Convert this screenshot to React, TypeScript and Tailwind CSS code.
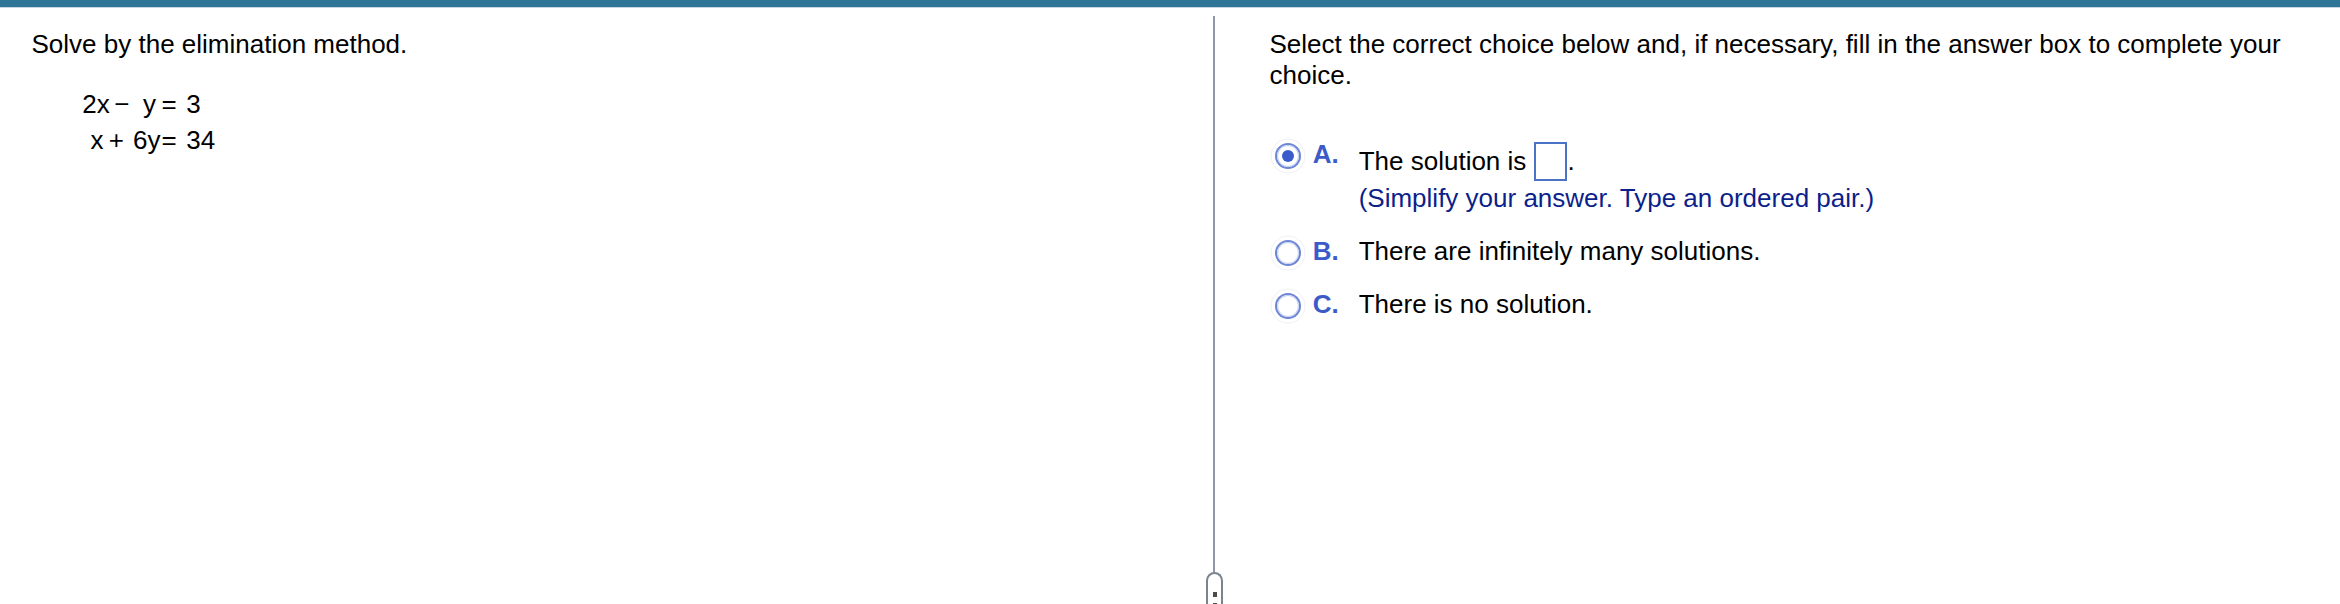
import React from "react"

function Radio({ checked }: { checked?: boolean }) {
    return (
        <svg width="36" height="36" viewBox="0 0 36 36" className="-m-[5px] block shrink-0">
            <circle cx="18" cy="18" r="17" fill="none" stroke="#f0f1f4" strokeWidth="1" />
            <circle cx="18" cy="18" r="12" fill="#fff" stroke="#6d86d6" strokeWidth="2" />
            <circle cx="18" cy="18" r="10.5" fill="none" stroke="#c3cdee" strokeWidth="1" />
            {checked && <circle cx="18" cy="18" r="6" fill="#3b5acb" />}
        </svg>
    )
}

function Choice({ letter, checked, className, children }: { letter: string; checked?: boolean; className?: string; children: React.ReactNode }) {
    return (
        <div className={"flex items-start " + (className ?? "")}>
            <div className="ml-[5.5px] mt-[4px]">
                <Radio checked={checked} />
            </div>
            <span className="ml-[11.7px] w-[46px] shrink-0 font-bold text-[#3d5bc8]">{letter}</span>
            {children}
        </div>
    )
}

function App() {
    return (
        <div className="h-[604px] w-[2340px] overflow-hidden bg-white font-['Liberation_Sans',Arial,sans-serif] text-[26px] leading-[31.2px] text-black">
            <div className="h-[7px] bg-[#2f7597]" />
            <div className="h-px bg-[#c9d7e1]" />

            <div className="flex">
                {/* question */}
                <div className="w-[1213px] shrink-0 pl-[31.5px] pt-[21px]">
                    <p>Solve by the elimination method.</p>
                    <div className="ml-[46.5px] mt-[26px] grid w-max grid-cols-[55px_23px_auto_auto] leading-[36px]">
                        <div className="pl-[4.3px]">
                            <span>2x</span>
                            <span className="ml-[4.6px]">−</span>
                        </div>
                        <div className="text-right">y</div>
                        <div className="pl-[5.5px]">=</div>
                        <div className="pl-[9.5px]">3</div>

                        <div className="pl-[12.5px]">
                            <span>x</span>
                            <span className="ml-[5.2px]">+</span>
                        </div>
                        <div className="text-right">6y</div>
                        <div className="pl-[5.5px]">=</div>
                        <div className="pl-[9.5px]">34</div>
                    </div>
                </div>

                {/* divider */}
                <div className="relative w-[2px] shrink-0">
                    <div className="mt-[8px] h-[556px] w-[2px] bg-[#8f97a8]" />
                    <div className="absolute left-[-7px] top-[564px] flex h-[48px] w-[17px] flex-col items-center gap-[6px] rounded-t-full border-2 border-b-0 border-[#7b8391] bg-white pt-[17.7px]">
                        <span className="h-[5px] w-[4px] bg-[#4b4b4b]" />
                        <span className="h-[5px] w-[4px] bg-[#4b4b4b]" />
                    </div>
                </div>

                {/* answer */}
                <div className="flex-1 pl-[54.5px] pr-[20px] pt-[21px]">
                    <p>Select the correct choice below and, if necessary, fill in the answer box to complete your choice.</p>

                    <Choice letter="A." checked className="mt-[47.5px]">
                        <div className="mt-[2.6px]">
                            <div>
                                The solution is{" "}
                                <span className="inline-block h-[39px] w-[33px] border-2 border-[#4a72c6] align-[-10.7px]" />
                                <span className="ml-[1px]">.</span>
                            </div>
                            <div className="mt-[2.7px] text-[#0c1f8a]">(Simplify your answer. Type an ordered pair.)</div>
                        </div>
                    </Choice>

                    <Choice letter="B." className="mt-[21.5px]">
                        <span>There are infinitely many solutions.</span>
                    </Choice>

                    <Choice letter="C." className="mt-[22.4px]">
                        <span>There is no solution.</span>
                    </Choice>
                </div>
            </div>
        </div>
    )
}

export default App
